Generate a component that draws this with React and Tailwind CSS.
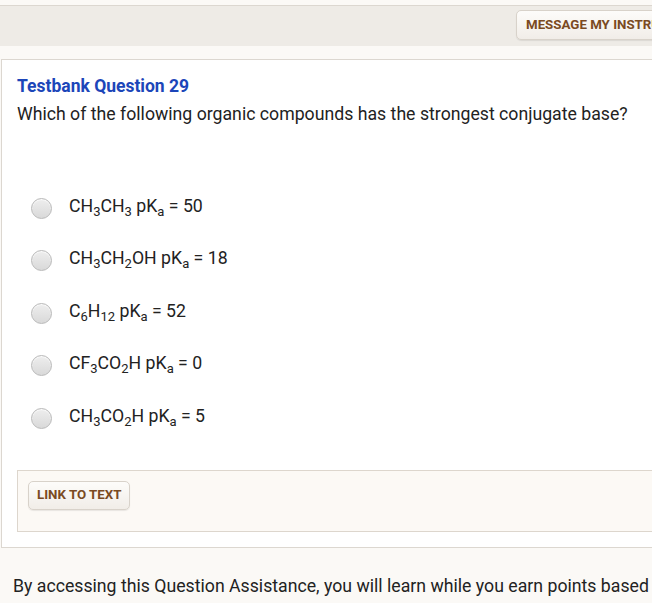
import React from "react";

const options = [
  { id: 1, parts: ["CH", ["3"], "CH", ["3"], " pK", ["a"], " = 50"] },
  { id: 2, parts: ["CH", ["3"], "CH", ["2"], "OH pK", ["a"], " = 18"] },
  { id: 3, parts: ["C", ["6"], "H", ["12"], " pK", ["a"], " = 52"] },
  { id: 4, parts: ["CF", ["3"], "CO", ["2"], "H pK", ["a"], " = 0"] },
  { id: 5, parts: ["CH", ["3"], "CO", ["2"], "H pK", ["a"], " = 5"] },
];

function Formula({ parts }) {
  return (
    <span>
      {parts.map((p, i) =>
        Array.isArray(p) ? (
          <span key={i} className="inline-block text-[13px] leading-none translate-y-[4px]">
            {p[0]}
          </span>
        ) : (
          <span key={i}>{p}</span>
        )
      )}
    </span>
  );
}

export default function App() {
  return (
    <div
      className="w-[652px] h-[603px] overflow-hidden bg-[#fbf9f6] text-[#222]"
      style={{ fontFamily: "Roboto, 'Liberation Sans', sans-serif" }}
    >
      <div className="h-[5px]" />
      <div className="h-[41px] bg-[#eeebe6] border-t border-[#dcd7d0] flex items-start pt-[4px]">
        <button className="h-[30px] ml-[516px] pl-[9px] pr-[20px] rounded-[5px] border border-[#d8d2ca] bg-gradient-to-b from-[#fdfcfa] to-[#f1ede8] shadow-[0_1px_1px_rgba(0,0,0,0.08)] text-[13.3px] font-bold text-[#7a4a22] whitespace-nowrap">
          MESSAGE MY INSTRUCTOR
        </button>
      </div>
      <div className="h-[13px]" />
      <div className="bg-white border-t border-b border-l border-[#dcd7d0] ml-[1px] w-[700px] pb-[15px]">
        <div className="pl-[15px] pt-[15px]">
          <h2 className="text-[17.5px] leading-[22px] font-bold text-[#1c46b9]">
            Testbank Question 29
          </h2>
          <p className="text-[17.7px] leading-[24px] mt-[5px]">
            Which of the following organic compounds has the strongest conjugate base?
          </p>
        </div>
        <ul className="mt-[71px] flex flex-col gap-[29.4px] pl-[29px]">
          {options.map((o) => (
            <li key={o.id} className="flex items-center h-[23px]">
              <span className="w-[21px] h-[21px] rounded-full border border-[#b9b9b9] bg-gradient-to-b from-[#eeeeee] to-[#d9d9d9] shadow-[inset_0_1px_1px_rgba(255,255,255,0.8)]" />
              <span className="ml-[17px] text-[17.7px] leading-[23px] -translate-y-[2px]">
                <Formula parts={o.parts} />
              </span>
            </li>
          ))}
        </ul>
        <div className="mt-[40px] ml-[15px] h-[62px] bg-[#fcf9f5] border border-[#ddd6cd] flex items-start pt-[10px] pl-[10px]">
          <button className="h-[29px] px-[8px] rounded-[5px] border border-[#d8d2ca] bg-gradient-to-b from-[#fdfcfa] to-[#f1ede8] shadow-[0_1px_1px_rgba(0,0,0,0.08)] text-[13.3px] font-bold text-[#7a4a22] whitespace-nowrap">
            LINK TO TEXT
          </button>
        </div>
      </div>
      <p className="pl-[13px] mt-[26px] text-[17.7px] leading-[24px] whitespace-nowrap">
        By accessing this Question Assistance, you will learn while you earn points based on the Point Potential Policy set by your instructor.
      </p>
    </div>
  );
}
